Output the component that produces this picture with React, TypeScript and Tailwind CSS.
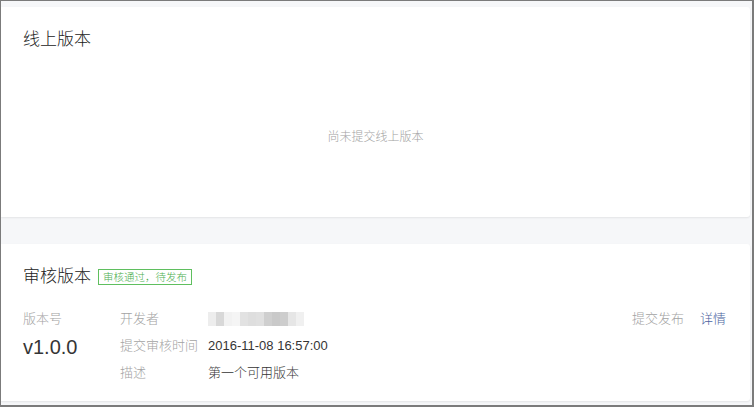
const cn = { fontFamily: '"Liberation Sans", "Noto Sans CJK SC", sans-serif' };

const blur = [
  "#ededed", "#d8d8d8", "#f2f2f2", "#f5f5f5", "#e2e2e2", "#dedede", "#e0e0e0",
  "#cfcfcf", "#c9c9c9", "#cdcdcd", "#e6e6e6", "#f0f0f0",
];

const Blurred = () => (
  <div className="flex h-[14px] w-[96px]">
    {blur.map((c, i) => (
      <div key={i} className="h-full flex-1" style={{ backgroundColor: c }} />
    ))}
  </div>
);

export default function App() {
  return (
    <div
      className="w-[754px] h-[407px] overflow-hidden border-l border-t border-r-2 border-b-2 border-[#7b7b7b] bg-[#f6f7f9] font-light"
      style={cn}
    >
      <div className="flex flex-col gap-[27px] pt-[6px] pr-[2px]">
        <div className="h-[210px] rounded-r-[3px] bg-white px-[22px] pt-[21px] shadow-[0_1px_2px_rgba(0,0,0,0.08)]">
          <h2 className="text-[17px] leading-[24px] text-[#222]">线上版本</h2>
          <p className="mt-[75px] text-center text-[12px] leading-[20px] text-[#a3a3a3]">尚未提交线上版本</p>
        </div>

        <div className="h-[157px] rounded-r-[3px] bg-white px-[22px] pt-[21px] shadow-[0_1px_2px_rgba(0,0,0,0.08)]">
          <div className="flex items-center gap-[7px]">
            <h2 className="text-[17px] leading-[24px] text-[#222]">审核版本</h2>
            <span className="border border-[#5fbf5f] px-[4px] text-[10.5px] leading-[14px] text-[#4caf50]">
              审核通过，待发布
            </span>
          </div>

          <div className="mt-[20px] flex">
            <div className="w-[97px]">
              <div className="text-[13px] leading-[20px] text-[#a3a3a3]">版本号</div>
              <div className="mt-[4px] text-[20px] leading-[28px] text-[#353535]">v1.0.0</div>
            </div>
            <div className="flex flex-1 flex-col gap-[7px] text-[13px] leading-[20px]">
              <div className="flex items-center">
                <span className="w-[88px] text-[#a3a3a3]">开发者</span>
                <Blurred />
              </div>
              <div className="flex">
                <span className="w-[88px] text-[#a3a3a3]">提交审核时间</span>
                <span className="text-[#353535]">2016-11-08 16:57:00</span>
              </div>
              <div className="flex">
                <span className="w-[88px] text-[#a3a3a3]">描述</span>
                <span className="text-[#353535]">第一个可用版本</span>
              </div>
            </div>
            <div className="flex gap-[16px] pr-[2px] text-[13px] leading-[20px]">
              <span className="text-[#a3a3a3]">提交发布</span>
              <span className="text-[#4a64a0]">详情</span>
            </div>
          </div>
        </div>
      </div>
    </div>
  );
}
